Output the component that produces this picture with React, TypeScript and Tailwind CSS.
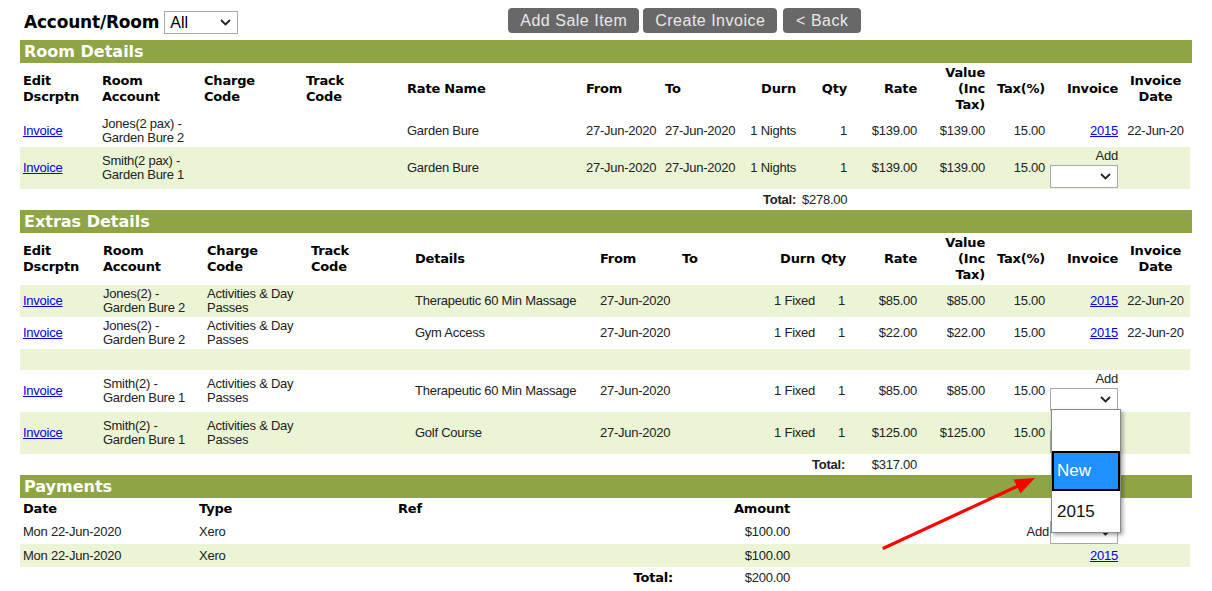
import React from "react";

const bodyFont = "font-['Liberation_Sans',Arial,sans-serif]";
const hdFont = "font-['DejaVu_Sans',Verdana,sans-serif]";
const td = `px-[3px] py-0 align-middle ${bodyFont} text-[13px] leading-[14px] tracking-[-0.25px] text-[#222]`;
const th = `px-[3px] py-0 align-middle ${hdFont} font-bold text-[13px] leading-[16px] tracking-[-0.2px] text-black`;

function Chevron() {
  return (
    <svg width="11" height="7" viewBox="0 0 11 7" className="block">
      <path d="M1 1l4.5 4.5L10 1" fill="none" stroke="#222" strokeWidth="1.8" />
    </svg>
  );
}

function Sel() {
  return (
    <div className="flex h-[23px] w-[68px] items-center justify-end border border-[#a9a9a9] bg-white pr-[6px]">
      <Chevron />
    </div>
  );
}

function AddSel() {
  return (
    <div className="flex flex-col items-end gap-[2px]">
      <span>Add</span>
      <Sel />
    </div>
  );
}

function Link({ children }: { children: React.ReactNode }) {
  return <a className="text-[#0000ee] underline">{children}</a>;
}

function SectionBar({ title }: { title: string }) {
  return (
    <div className={`h-[23px] bg-[#8fa445] pl-[4px] ${hdFont} text-[16px] font-bold leading-[24px] text-white`}>
      {title}
    </div>
  );
}

const roomCols = [
  "w-[79px]", "w-[102px]", "w-[102px]", "w-[101px]", "w-[179px]", "w-[79px]", "w-[79px]",
  "w-[58px]", "w-[51px]", "w-[70px]", "w-[68px]", "w-[60px]", "w-[73px]", "w-[69px]",
];
const extraCols = [
  "w-[80px]", "w-[104px]", "w-[104px]", "w-[104px]", "w-[185px]", "w-[82px]", "w-[81px]",
  "w-[58px]", "w-[30px]", "w-[72px]", "w-[68px]", "w-[60px]", "w-[73px]", "w-[69px]",
];
const payCols = ["w-[176px]", "w-[199px]", "w-[281px]", "w-[117px]", "w-[187px]", "w-[141px]", "w-[69px]"];

type Row = {
  bg: string;
  h: string;
  cells: React.ReactNode[];
};

const aligns = ["text-left", "text-left", "text-left", "text-left", "text-left", "text-left", "text-left",
  "text-right", "text-right", "text-right", "text-right", "text-right", "text-right", "text-center"];

function DataRow({ row }: { row: Row }) {
  return (
    <tr className={`${row.bg} ${row.h}`}>
      {row.cells.map((c, i) => (
        <td key={i} className={`${td} ${aligns[i]}`}>{c}</td>
      ))}
    </tr>
  );
}

function HeaderRow({ labels }: { labels: React.ReactNode[] }) {
  return (
    <tr className="h-[52px]">
      {labels.map((l, i) => (
        <th key={i} className={`${th} ${aligns[i]}`}>{l}</th>
      ))}
    </tr>
  );
}

const two = (a: string, b: string) => (
  <>
    {a}
    <br />
    {b}
  </>
);

export default function App() {
  const green = "bg-[#ebf4d4]";
  const white = "bg-white";

  const roomRows: Row[] = [
    {
      bg: white, h: "h-[32px]",
      cells: [<Link>Invoice</Link>, two("Jones(2 pax) -", "Garden Bure 2"), "", "", "Garden Bure", "27-Jun-2020", "27-Jun-2020",
        "1 Nights", "1", "$139.00", "$139.00", "15.00", <Link>2015</Link>, "22-Jun-20"],
    },
    {
      bg: green, h: "h-[42px]",
      cells: [<Link>Invoice</Link>, two("Smith(2 pax) -", "Garden Bure 1"), "", "", "Garden Bure", "27-Jun-2020", "27-Jun-2020",
        "1 Nights", "1", "$139.00", "$139.00", "15.00", <AddSel />, ""],
    },
  ];

  const extraRows: Row[] = [
    {
      bg: green, h: "h-[32px]",
      cells: [<Link>Invoice</Link>, two("Jones(2) -", "Garden Bure 2"), two("Activities & Day", "Passes"), "", "Therapeutic 60 Min Massage",
        "27-Jun-2020", "", "1 Fixed", "1", "$85.00", "$85.00", "15.00", <Link>2015</Link>, "22-Jun-20"],
    },
    {
      bg: white, h: "h-[32px]",
      cells: [<Link>Invoice</Link>, two("Jones(2) -", "Garden Bure 2"), two("Activities & Day", "Passes"), "", "Gym Access",
        "27-Jun-2020", "", "1 Fixed", "1", "$22.00", "$22.00", "15.00", <Link>2015</Link>, "22-Jun-20"],
    },
    {
      bg: green, h: "h-[21px]",
      cells: ["", "", "", "", "", "", "", "", "", "", "", "", "", ""],
    },
    {
      bg: white, h: "h-[42px]",
      cells: [<Link>Invoice</Link>, two("Smith(2) -", "Garden Bure 1"), two("Activities & Day", "Passes"), "", "Therapeutic 60 Min Massage",
        "27-Jun-2020", "", "1 Fixed", "1", "$85.00", "$85.00", "15.00", <AddSel />, ""],
    },
    {
      bg: green, h: "h-[42px]",
      cells: [<Link>Invoice</Link>, two("Smith(2) -", "Garden Bure 1"), two("Activities & Day", "Passes"), "", "Golf Course",
        "27-Jun-2020", "", "1 Fixed", "1", "$125.00", "$125.00", "15.00", <AddSel />, ""],
    },
  ];

  const btn = "flex h-[25px] items-center justify-center rounded-[4px] bg-[#686868] text-[16px] leading-[25px] tracking-[0.5px] text-[#e8e8e8]";

  return (
    <div className="relative h-[591px] w-[1212px] overflow-hidden bg-white">
      <div className="px-[20px]">
        {/* Top bar */}
        <div className="flex h-[40px] items-start pt-[8px]">
          <div className="mt-[3px] flex items-center">
            <span className={`pl-[4px] ${hdFont} text-[17px] font-bold leading-[23px] tracking-[-0.2px] text-black`}>
              Account/Room
            </span>
            <div className="ml-[5px] flex h-[23px] w-[74px] items-center justify-between border border-[#a9a9a9] bg-white pl-[5px] pr-[6px]">
              <span className={`${bodyFont} text-[16px] leading-[18px] text-black`}>All</span>
              <Chevron />
            </div>
          </div>
          <div className={`ml-[270px] flex items-center ${bodyFont}`}>
            <button className={`${btn} w-[131px]`}>Add Sale Item</button>
            <button className={`${btn} ml-[4px] w-[134px]`}>Create Invoice</button>
            <button className={`${btn} ml-[6px] w-[78px]`}>&lt; Back</button>
          </div>
        </div>

        {/* Room Details */}
        <SectionBar title="Room Details" />
        <table className="w-[1170px] table-fixed">
          <colgroup>
            {roomCols.map((c, i) => (
              <col key={i} className={c} />
            ))}
          </colgroup>
          <tbody>
            <HeaderRow
              labels={[two("Edit", "Dscrptn"), two("Room", "Account"), two("Charge", "Code"), two("Track", "Code"), "Rate Name",
                "From", "To", "Durn", "Qty", "Rate",
                <>Value<br />(Inc<br />Tax)</>, "Tax(%)", "Invoice", two("Invoice", "Date")]}
            />
            {roomRows.map((r, i) => (
              <DataRow key={i} row={r} />
            ))}
            <tr className="h-[21px]">
              <td colSpan={7} className={td}></td>
              <td className={`${td} text-right font-bold`}>Total:</td>
              <td className={`${td} text-right`}>$278.00</td>
              <td colSpan={5} className={td}></td>
            </tr>
          </tbody>
        </table>

        {/* Extras Details */}
        <SectionBar title="Extras Details" />
        <table className="w-[1170px] table-fixed">
          <colgroup>
            {extraCols.map((c, i) => (
              <col key={i} className={c} />
            ))}
          </colgroup>
          <tbody>
            <HeaderRow
              labels={[two("Edit", "Dscrptn"), two("Room", "Account"), two("Charge", "Code"), two("Track", "Code"), "Details",
                "From", "To", "Durn", "Qty", "Rate",
                <>Value<br />(Inc<br />Tax)</>, "Tax(%)", "Invoice", two("Invoice", "Date")]}
            />
            {extraRows.map((r, i) => (
              <DataRow key={i} row={r} />
            ))}
            <tr className="h-[21px]">
              <td colSpan={7} className={td}></td>
              <td colSpan={2} className={`${td} text-right font-bold`}>Total:</td>
              <td className={`${td} text-right`}>$317.00</td>
              <td colSpan={4} className={td}></td>
            </tr>
          </tbody>
        </table>

        {/* Payments */}
        <SectionBar title="Payments" />
        <table className="w-[1170px] table-fixed">
          <colgroup>
            {payCols.map((c, i) => (
              <col key={i} className={c} />
            ))}
          </colgroup>
          <tbody>
            <tr className="h-[22px]">
              <th className={`${th} text-left`}>Date</th>
              <th className={`${th} text-left`}>Type</th>
              <th className={`${th} text-left`}>Ref</th>
              <th className={`${th} text-right`}>Amount</th>
              <th className={th}></th>
              <th className={th}></th>
              <th className={th}></th>
            </tr>
            <tr className="h-[24px] bg-white">
              <td className={td}>Mon 22-Jun-2020</td>
              <td className={td}>Xero</td>
              <td className={td}></td>
              <td className={`${td} text-right`}>$100.00</td>
              <td className={td}></td>
              <td className={td}>
                <div className="flex items-center justify-end gap-[1px]">
                  <span>Add</span>
                  <Sel />
                </div>
              </td>
              <td className={td}></td>
            </tr>
            <tr className="h-[23px] bg-[#ebf4d4]">
              <td className={td}>Mon 22-Jun-2020</td>
              <td className={td}>Xero</td>
              <td className={td}></td>
              <td className={`${td} text-right`}>$100.00</td>
              <td className={td}></td>
              <td className={`${td} text-right`}>
                <Link>2015</Link>
              </td>
              <td className={td}></td>
            </tr>
            <tr className="h-[22px]">
              <td className={td}></td>
              <td className={td}></td>
              <td className={`${th} text-right`}>Total:</td>
              <td className={`${td} text-right`}>$200.00</td>
              <td className={td}></td>
              <td className={td}></td>
              <td className={td}></td>
            </tr>
          </tbody>
        </table>
      </div>

      {/* Open dropdown list */}
      <div className={`absolute left-[1051px] top-[409px] w-[70px] border border-[#8a8a8a] bg-white shadow-[2px_2px_4px_rgba(0,0,0,0.35)] ${bodyFont} text-[17px] text-[#111]`}>
        <div className="h-[41px]"></div>
        <div className="flex h-[40px] items-center border-2 border-black bg-[#1e90ff] pl-[3px] text-white">New</div>
        <div className="flex h-[41px] items-center pl-[5px]">2015</div>
      </div>

      {/* Red annotation arrow */}
      <svg className="pointer-events-none absolute left-0 top-0" width="1212" height="591" viewBox="0 0 1212 591">
        <line x1="884" y1="548" x2="1020" y2="485" stroke="#ff0000" strokeWidth="3.2" strokeLinecap="round" />
        <polygon points="1035,478 1020.5,493.5 1013.5,479.5" fill="#ff0000" />
      </svg>
    </div>
  );
}
